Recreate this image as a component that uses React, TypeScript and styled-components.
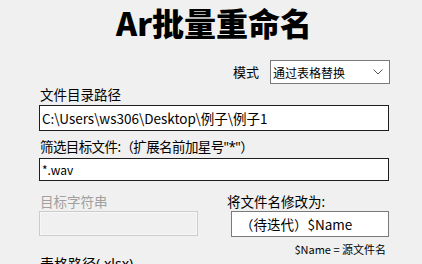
import * as React from 'react';
import styled, { createGlobalStyle } from 'styled-components';

const GlobalStyle = createGlobalStyle`
  html, body {
    margin: 0;
    padding: 0;
    background: #f0f0f0;
    overflow: hidden;
  }
  body {
    font-family: "Noto Sans CJK SC", "Noto Sans", sans-serif;
    color: #000;
  }
`;

const Page = styled.div`
  width: 422px;
  height: 264px;
  box-sizing: border-box;
  padding: 0 33px 0 39px;
  display: flex;
  flex-direction: column;
  overflow: hidden;
`;

const Title = styled.h1`
  margin: 3px 0 0;
  font-size: 32px;
  line-height: 38px;
  font-weight: 900;
  text-align: center;
`;

const ModeRow = styled.div`
  margin-top: 19px;
  display: flex;
  justify-content: flex-end;
  align-items: center;
  gap: 11px;
  margin-right: -1px;
`;

const ModeLabel = styled.span`
  font-size: 13px;
  line-height: 24px;
`;

const Select = styled.div`
  width: 120px;
  height: 24px;
  box-sizing: border-box;
  border: 1px solid #7a7a7a;
  background: #fff;
  display: flex;
  align-items: center;
  justify-content: space-between;
  padding: 0 6px 0 2px;
  font-size: 12px;
`;

const Label = styled.div<{ $muted?: boolean; $tight?: boolean }>`
  font-family: "Noto Sans", "Noto Sans CJK SC", sans-serif;
  font-size: 13.5px;
  line-height: 18px;
  padding-left: 1px;
  white-space: nowrap;
  letter-spacing: ${(p) => (p.$tight ? '-0.6px' : 'normal')};
  color: ${(p) => (p.$muted ? '#a0a0a0' : '#000')};
`;

const Field = styled.div<{ $size?: number; $height?: number }>`
  height: ${(p) => p.$height ?? 26}px;
  box-sizing: border-box;
  border: 1px solid #1e1e1e;
  background: #fff;
  display: flex;
  align-items: center;
  padding-left: 2px;
  font-size: ${(p) => p.$size ?? 14}px;
  white-space: nowrap;
  overflow: hidden;
`;

const Group = styled.div<{ $top: number; $gap?: number }>`
  margin-top: ${(p) => p.$top}px;
  display: flex;
  flex-direction: column;
  gap: ${(p) => p.$gap ?? 1}px;
`;

const Columns = styled.div`
  margin-top: 12px;
  display: grid;
  grid-template-columns: 159px 158px;
  justify-content: space-between;
`;

const DisabledField = styled.div`
  height: 25px;
  box-sizing: border-box;
  border: 1px solid #cccccc;
  box-shadow: inset 0 0 0 1px #f7f7f7;
  background: #f0f0f0;
`;

const RenameLabel = styled(Label)`
  margin-left: -5px;
`;

const RenameField = styled(Field)`
  border-color: #7a7a7a;
  padding-left: 8px;
`;

const Note = styled.div`
  margin-top: 6px;
  text-align: right;
  font-size: 11px;
  line-height: 13px;
  padding-right: 3px;
`;

const Cut = styled(Label)`
  margin-top: -1px;
  font-size: 14px;
`;

const Chevron = () => (
  <svg width="10" height="6" viewBox="0 0 10 6">
    <path d="M0.5 0.5 L5 5 L9.5 0.5" fill="none" stroke="#555" strokeWidth="1" />
  </svg>
);

export default function App() {
  return (
    <Page>
      <GlobalStyle />
      <Title>Ar批量重命名</Title>
      <ModeRow>
        <ModeLabel>模式</ModeLabel>
        <Select>
          <span>通过表格替换</span>
          <Chevron />
        </Select>
      </ModeRow>
      <Group $top={2}>
        <Label>文件目录路径</Label>
        <Field $size={13.5}>C:\Users\ws306\Desktop\例子\例子1</Field>
      </Group>
      <Group $top={7} $gap={2}>
        <Label $tight>筛选目标文件:（扩展名前加星号"*"）</Label>
        <Field $size={12} $height={23}>*.wav</Field>
      </Group>
      <Columns>
        <Group $top={0} $gap={0}>
          <Label $muted>目标字符串</Label>
          <DisabledField />
        </Group>
        <Group $top={0} $gap={0}>
          <RenameLabel>将文件名修改为:</RenameLabel>
          <RenameField $size={13.5} $height={26}>（待迭代）$Name</RenameField>
        </Group>
      </Columns>
      <Note>$Name = 源文件名</Note>
      <Cut>表格路径(.xlsx)</Cut>
    </Page>
  );
}
